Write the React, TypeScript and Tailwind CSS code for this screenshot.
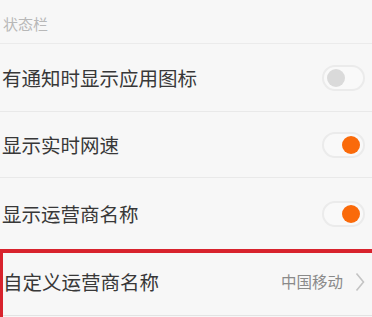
import React from "react";

const font = { fontFamily: '"Noto Sans CJK SC", "Noto Sans", sans-serif' };

function Toggle({ on }: { on: boolean }) {
  return (
    <div
      className={`w-[43px] h-[26px] rounded-full border-2 border-[#ebebeb] bg-[#f9f9f9] flex items-center px-[3px] ${
        on ? "justify-end" : "justify-start"
      }`}
    >
      <div
        className={`w-[18px] h-[18px] rounded-full ${on ? "bg-[#fa6a0a]" : "bg-[#dadada]"}`}
      />
    </div>
  );
}

function Row({ label, on, h }: { label: string; on: boolean; h: string }) {
  return (
    <div className={`flex items-center justify-between pl-[2px] pr-[7px] border-b border-[#e9e9e9] ${h}`}>
      <span className="text-[19.5px] text-[#383838] leading-none">{label}</span>
      <Toggle on={on} />
    </div>
  );
}

export default function App() {
  return (
    <div className="w-[372px] h-[317px] overflow-hidden bg-[#f7f7f7]" style={font}>
      <div className="h-[44px] flex items-center pl-[3px] pt-[3px] border-b border-[#ebebeb]">
        <span className="text-[15px] text-[#b8b8b8] leading-none">状态栏</span>
      </div>
      <Row label="有通知时显示应用图标" on={false} h="h-[68px]" />
      <Row label="显示实时网速" on={true} h="h-[66px]" />
      <div className="flex items-center justify-between pl-[2px] pr-[7px] h-[71px]">
        <span className="text-[19.5px] text-[#383838] leading-none">显示运营商名称</span>
        <Toggle on={true} />
      </div>
      <div className="border-l-[3px] border-t-4 border-[#d8232d] h-[100px]">
        <div className="flex items-center justify-between pr-[7px] h-[63px] border-b border-[#e3e3e3] pb-[4px]">
          <span className="text-[19.5px] text-[#383838] leading-none">自定义运营商名称</span>
          <div className="flex items-center gap-[12px]">
            <span className="text-[15.5px] text-[#8a8a8a] leading-none">中国移动</span>
            <svg width="10" height="20" viewBox="0 0 10 20" fill="none">
              <polyline points="1.5,1.5 8.5,10 1.5,18.5" stroke="#c4c4c4" strokeWidth="1.6" />
            </svg>
          </div>
        </div>
      </div>
    </div>
  );
}
